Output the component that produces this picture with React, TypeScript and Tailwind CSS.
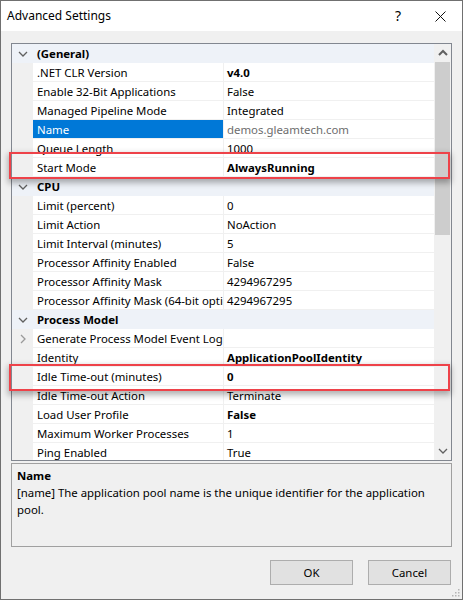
import React from "react";

type Row =
  | { kind: "cat"; label: string }
  | { kind: "prop"; name: string; value: string; bold?: boolean; selected?: boolean; expandable?: boolean };

const rows: Row[] = [
  { kind: "cat", label: "(General)" },
  { kind: "prop", name: ".NET CLR Version", value: "v4.0", bold: true },
  { kind: "prop", name: "Enable 32-Bit Applications", value: "False" },
  { kind: "prop", name: "Managed Pipeline Mode", value: "Integrated" },
  { kind: "prop", name: "Name", value: "demos.gleamtech.com", selected: true },
  { kind: "prop", name: "Queue Length", value: "1000" },
  { kind: "prop", name: "Start Mode", value: "AlwaysRunning", bold: true },
  { kind: "cat", label: "CPU" },
  { kind: "prop", name: "Limit (percent)", value: "0" },
  { kind: "prop", name: "Limit Action", value: "NoAction" },
  { kind: "prop", name: "Limit Interval (minutes)", value: "5" },
  { kind: "prop", name: "Processor Affinity Enabled", value: "False" },
  { kind: "prop", name: "Processor Affinity Mask", value: "4294967295" },
  { kind: "prop", name: "Processor Affinity Mask (64-bit option)", value: "4294967295" },
  { kind: "cat", label: "Process Model" },
  { kind: "prop", name: "Generate Process Model Event Log", value: "", expandable: true },
  { kind: "prop", name: "Identity", value: "ApplicationPoolIdentity", bold: true },
  { kind: "prop", name: "Idle Time-out (minutes)", value: "0", bold: true },
  { kind: "prop", name: "Idle Time-out Action", value: "Terminate" },
  { kind: "prop", name: "Load User Profile", value: "False", bold: true },
  { kind: "prop", name: "Maximum Worker Processes", value: "1" },
  { kind: "prop", name: "Ping Enabled", value: "True" },
];

const Chevron = ({ dir, color }: { dir: "down" | "right" | "up"; color: string }) => {
  const d =
    dir === "down" ? "M1 3 L5 7 L9 3" : dir === "up" ? "M1 7 L5 3 L9 7" : "M3 1 L7 5 L3 9";
  return (
    <svg width="10" height="10" viewBox="0 0 10 10" fill="none">
      <path d={d} stroke={color} strokeWidth={dir === "up" ? 2 : 1.3} />
    </svg>
  );
};

function GridRow({ row }: { row: Row }) {
  if (row.kind === "cat") {
    return (
      <div className="flex h-[19px] items-center bg-[#eef2f8]">
        <div className="flex w-[21px] justify-center pl-[1px]">
          <Chevron dir="down" color="#606060" />
        </div>
        <span className="pl-[4px] font-bold text-black">{row.label}</span>
      </div>
    );
  }
  return (
    <div className="flex h-[19px]">
      <div className="flex w-[21px] shrink-0 items-center justify-center bg-[#f0f0f0]">
        {row.expandable && <Chevron dir="right" color="#9a9a9a" />}
      </div>
      <div
        className={`flex w-[190px] shrink-0 items-center overflow-hidden whitespace-nowrap border-b border-[#f0f0f0] pl-[4px] pt-[1px] ${
          row.selected ? "bg-[#0078d7] text-white" : "bg-white text-black"
        }`}
      >
        {row.name}
      </div>
      <div className="w-[1px] shrink-0 bg-[#f0f0f0]" />
      <div
        className={`flex flex-1 items-center overflow-hidden whitespace-nowrap border-b border-[#f0f0f0] bg-white pl-[3px] pt-[1px] ${
          row.bold ? "font-bold" : ""
        } ${row.selected ? "text-[#6d6d6d]" : "text-black"}`}
      >
        {row.value}
      </div>
    </div>
  );
}

export default function App() {
  return (
    <div
      className="relative h-[600px] w-[463px] overflow-hidden bg-[#f0f0f0] text-[11.4px] leading-[16px] text-black"
      style={{ fontFamily: '"Noto Sans", "Open Sans", sans-serif' }}
    >
      <div className="flex h-full flex-col border-x border-t border-b border-[#707070]">
        {/* Title bar */}
        <div className="flex h-[30px] shrink-0 items-center bg-white">
          <span className="pl-[6px] text-[12px]">Advanced Settings</span>
          <span className="ml-auto mr-[34px] text-[14px]">?</span>
          <svg width="11" height="11" viewBox="0 0 11 11" className="mr-[16px]">
            <path d="M0.5 0.5 L10.5 10.5 M10.5 0.5 L0.5 10.5" stroke="#111" strokeWidth="1" />
          </svg>
        </div>

        {/* Body */}
        <div className="flex flex-1 flex-col px-[10px] pt-[12px]">
          {/* Property grid */}
          <div className="flex h-[418px] border border-[#828790] bg-[#f0f0f0]">
            <div className="flex-1 overflow-hidden">
              {rows.map((r, i) => (
                <GridRow key={i} row={r} />
              ))}
            </div>
            <div className="flex w-[17px] flex-col items-center bg-[#f0f0f0]">
              <div className="flex h-[18px] items-center justify-center">
                <Chevron dir="up" color="#606060" />
              </div>
              <div className="h-[173px] w-[15px] bg-[#cdcdcd]" />
              <div className="flex-1" />
              <div className="flex h-[18px] items-center justify-center">
                <Chevron dir="down" color="#606060" />
              </div>
            </div>
          </div>

          {/* Description */}
          <div className="mt-[2px] h-[84px] border border-[#a0a0a0] bg-[#f0f0f0] px-[5px] pt-[3px] leading-[17px]">
            <div className="font-bold">Name</div>
            <div>[name] The application pool name is the unique identifier for the application pool.</div>
          </div>

          {/* Buttons */}
          <div className="mt-[13px] flex justify-end gap-[15px] pr-[1px]">
            <button className="h-[25px] w-[83px] border border-[#adadad] bg-[#e1e1e1]">OK</button>
            <button className="h-[25px] w-[83px] border border-[#adadad] bg-[#e1e1e1]">Cancel</button>
          </div>
        </div>

        {/* Resize grip */}
        <svg width="10" height="10" viewBox="0 0 10 10" className="absolute bottom-[3px] right-[3px]">
          {[
            [8, 2],
            [8, 5],
            [5, 5],
            [8, 8],
            [5, 8],
            [2, 8],
          ].map(([x, y], i) => (
            <rect key={i} x={x} y={y} width="1.5" height="1.5" fill="#b5b5b5" />
          ))}
        </svg>
      </div>

      {/* Highlight annotations */}
      <div className="pointer-events-none absolute left-[9px] top-[152px] h-[27px] w-[441px] border-[2.5px] border-[#ee4249] shadow-[0_3px_6px_1px_rgba(0,0,0,0.3)]" />
      <div className="pointer-events-none absolute left-[9px] top-[364px] h-[27px] w-[441px] border-[2.5px] border-[#ee4249] shadow-[0_3px_6px_1px_rgba(0,0,0,0.3)]" />
    </div>
  );
}
